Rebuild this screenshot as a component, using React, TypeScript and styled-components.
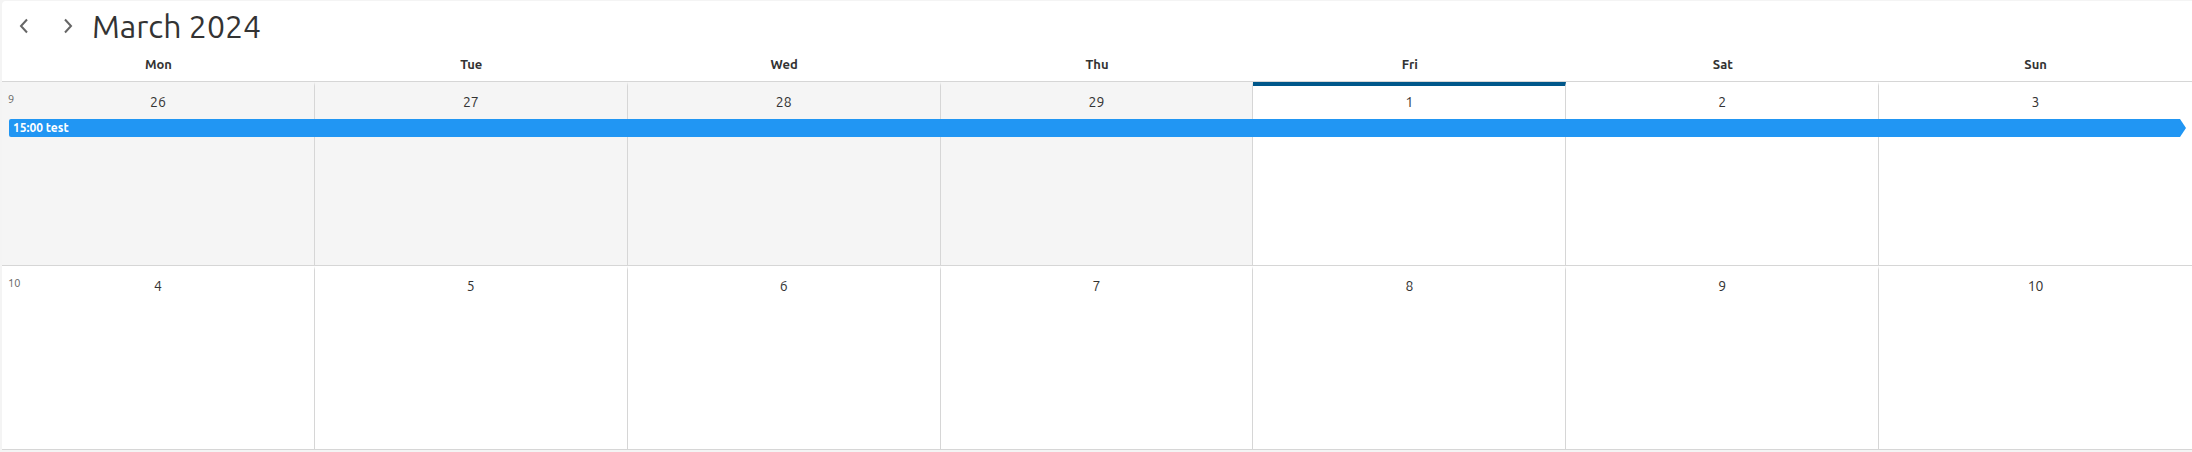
import React from 'react';
import styled, { createGlobalStyle } from 'styled-components';

const GlobalStyle = createGlobalStyle`
  html, body {
    margin: 0;
    padding: 0;
    background: #f4f4f4;
    font-family: 'Ubuntu', 'Noto Sans', sans-serif;
    color: #333333;
  }
`;

// ===== DATA =====

const DAY_NAMES = ['Mon', 'Tue', 'Wed', 'Thu', 'Fri', 'Sat', 'Sun'];

const WEEKS = [
  {
    week: 9,
    days: [
      { n: 26, past: true },
      { n: 27, past: true },
      { n: 28, past: true },
      { n: 29, past: true },
      { n: 1, today: true },
      { n: 2 },
      { n: 3 },
    ],
    event: '15:00 test',
  },
  {
    week: 10,
    days: [{ n: 4 }, { n: 5 }, { n: 6 }, { n: 7 }, { n: 8 }, { n: 9 }, { n: 10 }],
  },
];

// ===== STYLED COMPONENTS =====

const Card = styled.div`
  margin: 1px 0 0 2px;
  background: #ffffff;
  border-radius: 4px 0 0 0;
  display: flex;
  flex-direction: column;
`;

const Toolbar = styled.div`
  height: 49px;
  display: flex;
  align-items: center;
  padding-left: 4px;
  gap: 8px;
`;

const NavButton = styled.button`
  width: 36px;
  height: 36px;
  border: none;
  background: transparent;
  padding: 0;
  display: flex;
  align-items: center;
  justify-content: center;
  cursor: pointer;
`;

const Title = styled.h1`
  margin: 0 0 0 -2px;
  font-size: 32px;
  font-weight: 400;
  color: #333333;
  line-height: 36px;
`;

const Grid = styled.div<{ $height: number }>`
  display: grid;
  grid-template-columns: repeat(7, 1fr);
  height: ${p => p.$height}px;
  border-bottom: 1px solid #d6d6d6;
  position: relative;
`;

const DayLabel = styled.div`
  display: flex;
  align-items: center;
  justify-content: center;
  font-size: 13px;
  font-weight: 700;
  color: #333333;
  padding-bottom: 4px;
`;

const Cell = styled.div<{ $past?: boolean; $today?: boolean; $last?: boolean }>`
  position: relative;
  background: ${p => (p.$past ? '#f5f5f5' : '#ffffff')};
  border-right: ${p => (p.$last ? 'none' : '1px solid #d6d6d6')};
  border-top: 4px solid ${p => (p.$today ? '#00578a' : 'transparent')};
  text-align: center;
`;

const DayNumber = styled.div`
  font-size: 14px;
  line-height: 20px;
  padding-top: 6px;
  color: #333333;
`;

const WeekNumber = styled.span`
  position: absolute;
  left: 6px;
  top: 7px;
  font-size: 11px;
  color: #666666;
`;

const EventBar = styled.div`
  position: absolute;
  left: 7px;
  right: 6px;
  top: 37px;
  height: 18px;
  background: #2196f3;
  border-radius: 2px 0 0 2px;
  clip-path: polygon(0 0, calc(100% - 6px) 0, 100% 50%, calc(100% - 6px) 100%, 0 100%);
  color: #ffffff;
  font-size: 12px;
  font-weight: 700;
  line-height: 18px;
  padding-left: 4px;
  box-sizing: border-box;
`;

// ===== ICONS =====

const Chevron: React.FC<{ dir: 'left' | 'right' }> = ({ dir }) => (
  <svg width="10" height="16" viewBox="0 0 10 16">
    <path
      d={dir === 'left' ? 'M8 1.5 L2 8 L8 14.5' : 'M2 1.5 L8 8 L2 14.5'}
      fill="none"
      stroke="#666666"
      strokeWidth="2"
    />
  </svg>
);

// ===== MAIN COMPONENT =====

export default function App() {
  return (
    <>
      <GlobalStyle />
      <Card>
        <Toolbar>
          <NavButton aria-label="Previous">
            <Chevron dir="left" />
          </NavButton>
          <NavButton aria-label="Next">
            <Chevron dir="right" />
          </NavButton>
          <Title>March 2024</Title>
        </Toolbar>

        <Grid $height={31}>
          {DAY_NAMES.map(d => (
            <DayLabel key={d}>{d}</DayLabel>
          ))}
        </Grid>

        {WEEKS.map(w => (
          <Grid key={w.week} $height={183}>
            {w.days.map((d, i) => (
              <Cell key={d.n} $past={d.past} $today={d.today} $last={i === 6}>
                {i === 0 && <WeekNumber>{w.week}</WeekNumber>}
                <DayNumber>{d.n}</DayNumber>
              </Cell>
            ))}
            {w.event && <EventBar>{w.event}</EventBar>}
          </Grid>
        ))}
      </Card>
    </>
  );
}
